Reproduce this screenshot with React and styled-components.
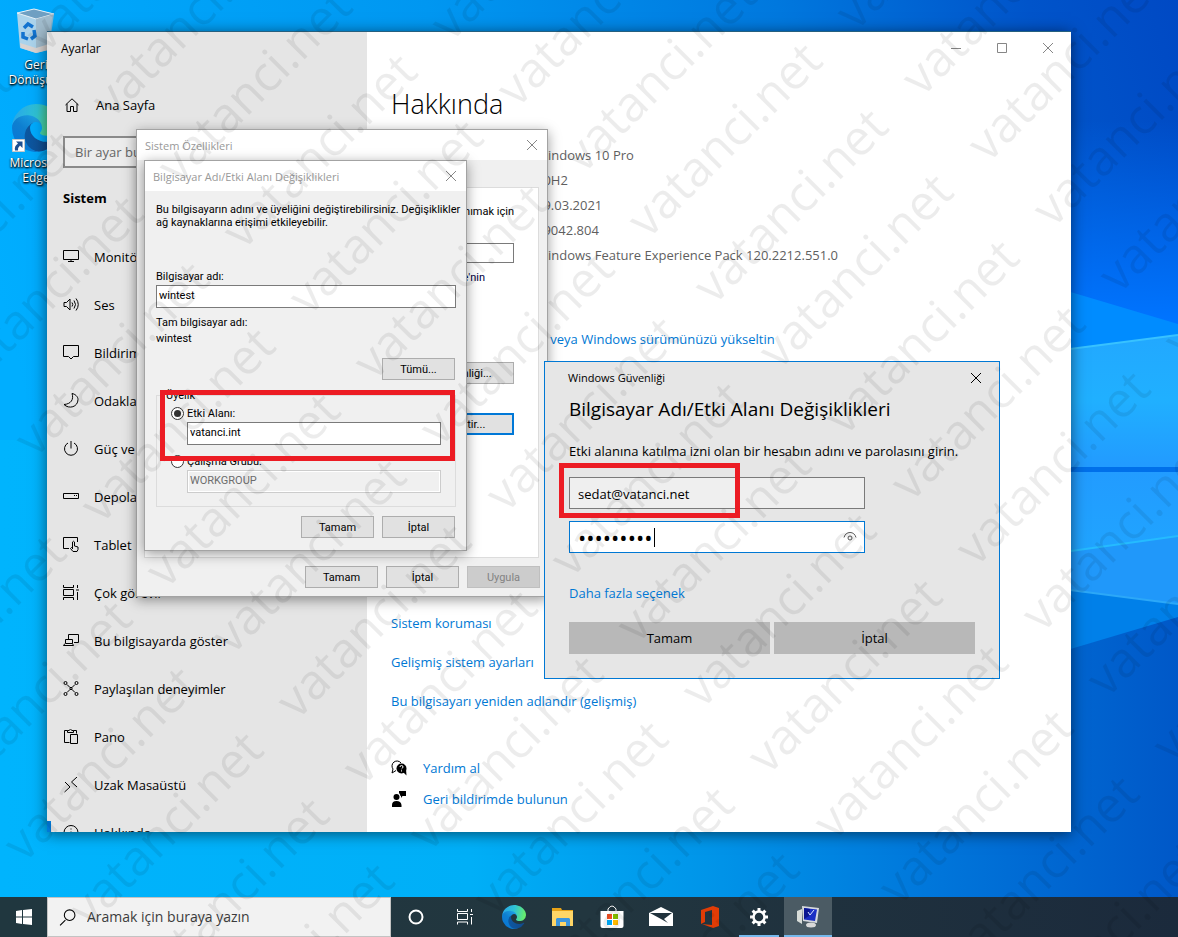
import React, { useState } from 'react';
import styled, { createGlobalStyle, css } from 'styled-components';

const UI = '"Open Sans", "Noto Sans", sans-serif';
const CLASSIC = 'Roboto, "Liberation Sans", Arial, sans-serif';

const navItems = [
  { icon: 'monitor', label: 'Monitör' },
  { icon: 'sound', label: 'Ses' },
  { icon: 'notify', label: 'Bildirimler ve eylemler' },
  { icon: 'moon', label: 'Odaklanma yardımı' },
  { icon: 'power', label: 'Güç ve uyku' },
  { icon: 'storage', label: 'Depolama' },
  { icon: 'tablet', label: 'Tablet' },
  { icon: 'tasks', label: 'Çok görevli' },
  { icon: 'project', label: 'Bu bilgisayarda göster' },
  { icon: 'shared', label: 'Paylaşılan deneyimler' },
  { icon: 'clipboard', label: 'Pano' },
  { icon: 'remote', label: 'Uzak Masaüstü' },
  { icon: 'info', label: 'Hakkında', active: true },
];

const specs = [
  ['Sürüm', 'Windows 10 Pro'],
  ['Sürüm', '20H2'],
  ['Yüklenme tarihi', '29.03.2021'],
  ['İS derlemesi', '19042.804'],
  ['Deneyim', 'Windows Feature Experience Pack 120.2212.551.0'],
];

/* ---------- icons ---------- */

const glyphs = {
  home: <path d="M1.5 8 8 1.8 14.5 8M3 6.8v7.7h3.5V9.5h3v5h3.500V6.800" />,
  monitor: <path d="M.5 1.500h15v9H.5zM8 10.500v2M5 12.500h6" />,
  sound: <path d="M1 5.500h2.500l3.500-3.500v11L3.500 9.500H1zM9 5.500q1.500 2 0 4M11 3.500q3 4 0 8M13 1.500q4.500 6 0 12" />,
  notify: <path d="M.5.500h15v11h-5l-2.500 2.500-2.500-2.500h-5z" />,
  moon: <path d="M9 .5c2 6-1 10.500-8 11 5 5 14 2.500 14-5C15 3.500 12 1 9 .5z" />,
  power: <path d="M8 0v7.500M5 2a6.500 6.500 0 1 0 6 0" />,
  storage: <><path d="M.5 4.500h15v5H.5z" /><path d="M11 6.500h1M13 6.500h1" /></>,
  tablet: <path d="M6 11.500H.5v-11h14V5M3 11.500h3M9.500 12V5q1-1.500 2 0v4l3.500 1v2.500l-1 2h-4l-2.500-3 1-1 1 1" />,
  tasks: <path d="M.5 0v2.500h10V0M.5 4.500h10v6H.5zM.5 15v-2.500h10V15M14.500 0v3M14.500 7v8M13 5h3" />,
  project: <path d="M5.500 6V1.500h10v8H11M2.500 6.500h7v4h-7zM.5 12.500h10l-1-2M.5 12.500l1.500-2" />,
  shared: (
    <>
      <path d="m4 3.500 3 3M12 3.500l-3 3M4 11.500l3-3M12 11.500l-3-3M7 6.500h2v2H7z" />
      <circle cx="2.500" cy="2" r="1.500" />
      <circle cx="13.500" cy="2" r="1.500" />
      <circle cx="2.500" cy="13" r="1.500" />
      <circle cx="13.500" cy="13" r="1.500" />
    </>
  ),
  clipboard: <path d="M6.500 13.500h-5v-12h3v2h6v-2h3v3M4.500 1.500H6Q7.500-1 9 1.500h1.500M7.500 5.500h7v9h-7z" />,
  remote: <path d="M2 5 7 10l-5.500 5M14 0 8.500 5l5.500 5" />,
  info: <><circle cx="8" cy="7.500" r="7" /><path d="M8 6.500v5M8 3.500v1" /></>,
  close: <path d="m3 3 10 10M13 3 3 13" />,
  minimize: <path d="M3 8.500h10" />,
  maximize: <path d="M3.500 3.500h9v9h-9z" />,
  search: <path d="M1 15.500 6 10.500M15 5.800A5 5 0 1 1 5 5.800a5 5 0 0 1 10 0z" />,
  eye: <><path d="M2 8.500q1.500-5 6-5t6 5" /><circle cx="8" cy="9" r="2" /></>,
};

function Glyph({ name, size = 16 }) {
  return (
    <svg width={size} height={size} viewBox="0 0 16 16" fill="none" stroke="currentColor" strokeWidth="1" aria-hidden="true">
      {glyphs[name]}
    </svg>
  );
}

function EdgeLogo({ size, id }) {
  return (
    <svg width={size} height={size} viewBox="0 0 256 256" aria-hidden="true">
      <defs>
        <linearGradient id={`${id}-a`} x1="60" y1="180" x2="240" y2="180" gradientUnits="userSpaceOnUse">
          <stop offset="0" stopColor="#0c59a4" />
          <stop offset="1" stopColor="#114a8b" />
        </linearGradient>
        <linearGradient id={`${id}-b`} x1="150" y1="100" x2="45" y2="220" gradientUnits="userSpaceOnUse">
          <stop offset="0" stopColor="#1b9de2" />
          <stop offset=".5" stopColor="#0e7fd0" />
          <stop offset="1" stopColor="#0a78d4" />
        </linearGradient>
        <linearGradient id={`${id}-c`} x1="10" y1="60" x2="240" y2="110" gradientUnits="userSpaceOnUse">
          <stop offset="0" stopColor="#28a8e8" />
          <stop offset=".5" stopColor="#2fc3d4" />
          <stop offset="1" stopColor="#66eb6e" />
        </linearGradient>
      </defs>
      <path transform="translate(-4.600 -4.900)" fill={`url(#${id}-a)`} d="M235.680 195.460a93.730 93.730 0 0 1-10.540 4.710 101.870 101.870 0 0 1-35.900 6.460c-47.320 0-88.540-32.550-88.540-74.320A31.480 31.480 0 0 1 117.130 105c-42.800 1.800-53.800 46.400-53.800 72.530 0 73.880 68.090 81.370 82.760 81.370 7.910 0 19.840-2.300 27-4.560l1.310-.44a128.340 128.340 0 0 0 66.600-52.800 4 4 0 0 0-5.320-5.640z" />
      <path fill={`url(#${id}-b)`} d="M105.730 241.420a79.200 79.200 0 0 1-22.740-21.340 80.720 80.720 0 0 1 29.530-120c3.120-1.470 8.450-4.130 15.540-4a32.350 32.350 0 0 1 25.690 13 31.880 31.880 0 0 1 6.360 18.660c0-.21 24.460-79.600-80-79.600-43.900 0-80 41.660-80 78.210a130.150 130.150 0 0 0 12.110 56 128 128 0 0 0 156.380 67.110 75.550 75.550 0 0 1-62.780-8z" />
      <path fill={`url(#${id}-c)`} d="M152.330 148.860c-.81 1.050-3.300 2.500-3.300 5.660 0 2.610 1.700 5.120 4.720 7.230 14.380 10 41.490 8.680 41.560 8.680a59.560 59.560 0 0 0 30.270-8.350 61.380 61.380 0 0 0 30.430-52.880c.26-22.410-8-37.310-11.340-43.910C223.460 23.840 177.720 0 128 0A128 128 0 0 0 0 126.200c.48-36.540 36.800-66.050 80-66.050 3.500 0 23.460.34 42 10.070 16.340 8.580 24.900 18.940 30.850 29.210 6.180 10.670 7.280 24.150 7.280 29.520s-2.740 13.330-7.800 19.910z" />
    </svg>
  );
}

function RecycleBin() {
  return (
    <svg width="48" height="48" viewBox="0 0 48 48" aria-hidden="true">
      <path d="M5 7 22 3l20 5-2 4-4 32-12 3-16-5z" fill="#c9dbe8" fillOpacity=".85" />
      <path d="m5 7 17-4 20 5-18 5z" fill="#6f9fc2" stroke="#e6f1f8" />
      <path d="m24 13 18-5-5 35-13 4z" fill="#9fb6c6" fillOpacity=".8" />
      <path d="m8 37 16 5 13-4-1 6-12 3-15-5z" fill="#d9d4d2" />
      <g fill="none" stroke="#1273cf" strokeWidth="3.500">
        <path d="m12 22 4-4 5 3" />
        <path d="m22 24 1 6-4 3" />
        <path d="m16 33-5-2v-5" />
      </g>
    </svg>
  );
}

function ShortcutArrow() {
  return (
    <svg width="13" height="13" viewBox="0 0 13 13" aria-hidden="true">
      <path d="M.5.500h12v12H.5z" fill="#fff" stroke="#c8c8c8" />
      <path d="M4 2.500h6.500V9L8 6.500Q6 8 6 11.500H3Q2 7 6 4.500z" fill="#1d4f91" />
    </svg>
  );
}

const taskIcons = {
  cortana: <circle cx="12" cy="12" r="6.500" fill="none" stroke="#fff" strokeWidth="2" />,
  tasks: (
    <path d="M4.500 4v2.500h10V4M4.500 8.500h10v6h-10zM4.500 19.500V17h10v2.500M18.500 4v3M18.500 12v7.500M17 9.500h3" fill="none" stroke="#fff" />
  ),
  folder: (
    <>
      <path d="M1 3h9l1 2h11v3H1z" fill="#e8a317" />
      <path d="M1 6h21v15H1z" fill="#ffd667" />
      <path d="M5 21v-7l1-1h12l1 1v7h-4v-4H9v4z" fill="#3d96dd" />
    </>
  ),
  store: (
    <>
      <path d="M8 6V4q4-6 8 0v2" fill="none" stroke="#fff" />
      <path d="M.5 6h23v15q0 2-2 2h-19q-2 0-2-2z" fill="#fff" />
      <path d="M7 9h5v5H7z" fill="#f25022" />
      <path d="M13 9h5v5h-5z" fill="#7fba00" />
      <path d="M7 15h5v5H7z" fill="#00a4ef" />
      <path d="M13 15h5v5h-5z" fill="#ffb900" />
    </>
  ),
  mail: (
    <>
      <path d="M0 8 12 2l12 6v13H0z" fill="#fff" />
      <path d="M1 8h22l-8 6 4 4-7-4z" fill="#20323c" />
    </>
  ),
  office: <path d="M15 1 3 5v14l4-2V7l7-2v15l-10-1 11 4 6-2V3z" fill="#e03c06" />,
  gear: (
    <>
      <circle cx="12" cy="12" r="5.500" fill="none" stroke="#fff" strokeWidth="2.500" />
      {[0, 45, 90, 135, 180, 225, 270, 315].map((a) => (
        <path key={a} d="M10.500 3h3v3.500h-3z" fill="#fff" transform={`rotate(${a} 12 12)`} />
      ))}
    </>
  ),
  computer: (
    <>
      <path d="M1 6 6 4v15l-5-3z" fill="#d8dcd8" />
      <path d="m6 1 17 2-2 15-14-2z" fill="#d6d9de" />
      <path d="m8 3 13 1.500-2 11.500-11-1.500z" fill="#1b2fc4" />
      <path d="m8 3 6 1-1 7-5 3z" fill="#0b1690" />
      <path d="m12 7 2 3 4-5" fill="none" stroke="#dfe7ff" />
      <ellipse cx="15" cy="20" rx="5" ry="2.500" fill="#d9d9d9" />
    </>
  ),
};

function HelpIcon() {
  return (
    <svg width="16" height="16" viewBox="0 0 16 16" aria-hidden="true">
      <path d="M5 10.500 1 13l1-4A4.800 4.800 0 1 1 10 3" fill="none" stroke="#000" />
      <circle cx="10.500" cy="8.500" r="5" />
      <path d="m12 12 3.500 3.500L15 9z" />
      <path d="M9 7q0-1.500 1.500-1.500T12 7q0 .8-1.500 2M10.500 10.300v1.200" fill="none" stroke="#fff" />
    </svg>
  );
}

function FeedbackIcon() {
  return (
    <svg width="16" height="16" viewBox="0 0 16 16" aria-hidden="true">
      <circle cx="5.500" cy="6" r="3" />
      <path d="M1 16v-2q0-4 4.500-4t5 4v2zM8 0h7v5h-3.500L10 7V5H9.500Q9 3 8 2z" />
    </svg>
  );
}

/* ---------- desktop ---------- */

const GlobalStyle = createGlobalStyle`
  *, *::before, *::after { box-sizing: border-box; }
  body { margin: 0; background: #0090e8; }
  button, input { font: inherit; color: inherit; margin: 0; }
  button { cursor: pointer; }
  h1, h2, p { margin: 0; font-weight: 400; }
`;

const Desktop = styled.div`
  position: relative;
  display: flex;
  flex-direction: column;
  min-height: 100vh;
  overflow: hidden;
  font-family: ${UI};
  font-size: 13px;
  line-height: 20px;
  color: #000;
`;

const Backdrop = styled.svg`
  position: absolute;
  inset: 0;
  width: 100%;
  height: 100%;
`;

const Workspace = styled.main`
  position: relative;
  flex: 1;
`;

const Shortcuts = styled.div`
  position: relative;
  display: flex;
  flex-direction: column;
  gap: 17px;
  width: 72px;
  padding-top: 6px;
`;

const Shortcut = styled.a`
  display: flex;
  flex-direction: column;
  align-items: center;
  gap: 3px;
  color: #fff;
  font-size: 12px;
  line-height: 15px;
  text-align: center;
  text-decoration: none;
  text-shadow: 0 1px 2px #000, 1px 1px 2px #000;

  svg { display: block; }
`;

const ShortcutLabel = styled.span`
  width: 60px;
`;

const ShortcutArt = styled.span`
  position: relative;

  svg + svg {
    position: absolute;
    left: 0;
    bottom: 0;
  }
`;

/* ---------- windows ---------- */

const SettingsWindow = styled.section`
  position: absolute;
  left: 47px;
  top: 31px;
  display: grid;
  grid-template-columns: 320px 1fr;
  width: 1024px;
  height: 801px;
  overflow: hidden;
  background: #fff;
  border-top: 1px solid #26607f;
`;

const SettingsShadow = styled.div`
  position: absolute;
  left: 47px;
  top: 31px;
  width: 1024px;
  height: 801px;
  box-shadow: 0 2px 14px rgba(0, 0, 0, 0.55);
`;

const Sidebar = styled.aside`
  min-width: 0;
  background: #e5e5e5;
`;

const AppTitle = styled.h2`
  padding: 7px 14px;
  font-size: 12px;
  line-height: 20px;
`;

const HomeLink = styled.a`
  display: flex;
  align-items: center;
  gap: 16px;
  height: 40px;
  margin-top: 19px;
  padding-left: 17px;
  color: inherit;
  text-decoration: none;
`;

const SearchSetting = styled.input`
  display: block;
  width: 288px;
  height: 32px;
  margin: 11px 16px 0;
  padding: 0 10px;
  border: 2px solid #8a8a8a;
  background: #ececec;

  &::placeholder { color: #666; opacity: 1; }
`;

const GroupTitle = styled.h2`
  padding: 20px 16px 0;
  font-size: 13px;
  font-weight: 700;
`;

const NavList = styled.nav`
  display: flex;
  flex-direction: column;
  margin-top: 25px;
`;

const NavLink = styled.a`
  display: flex;
  align-items: center;
  gap: 15px;
  height: 48px;
  padding-left: 16px;
  color: inherit;
  text-decoration: none;
  ${({ $active }) => $active && css`
    background: linear-gradient(#0078d7, #0078d7) 0 50% / 4px 24px no-repeat;
  `}
`;

const Content = styled.div`
  display: flex;
  flex-direction: column;
  min-width: 0;
  padding: 0 0 0 24px;
`;

const WindowButtons = styled.div`
  display: flex;
  justify-content: flex-end;
`;

const WindowButton = styled.button`
  display: grid;
  place-items: center;
  width: ${({ $narrow }) => ($narrow ? '30px' : '46px')};
  height: ${({ $narrow }) => ($narrow ? '28px' : '32px')};
  padding: 0;
  border: 0;
  background: none;
  color: ${({ $dark }) => ($dark ? '#000' : '#868686')};
`;

const PageTitle = styled.h1`
  margin: 20px 0 19px;
  font-size: 27px;
  font-weight: 300;
  line-height: 40px;
`;

const SpecTable = styled.table`
  border-collapse: collapse;
  color: #5f5f5f;
  line-height: 25px;

  th {
    width: 145px;
    padding: 0;
    font-weight: 400;
    text-align: left;
  }
  td { padding: 0; }
`;

const TextLink = styled.a`
  color: #0078d4;
  text-decoration: none;
`;

const UpgradeBlock = styled.div`
  padding-top: 61px;
`;

const RelatedLinks = styled.div`
  display: flex;
  flex-direction: column;
  align-items: flex-start;
  gap: 19px;
  margin-top: 264px;
`;

const HelpLinks = styled.div`
  display: flex;
  flex-direction: column;
  gap: 11px;
  margin-top: 47px;

  a {
    display: flex;
    align-items: center;
    gap: 16px;
  }
`;

const dialogFrame = css`
  position: absolute;
  display: flex;
  flex-direction: column;
  border: 1px solid #a3a3a3;
  background: #f0f0f0;
  font-family: ${CLASSIC};
  font-size: 11px;
  line-height: 13px;
  box-shadow: 0 3px 12px rgba(0, 0, 0, 0.4);
`;

const PropertiesDialog = styled.section`
  ${dialogFrame}
  left: 136px;
  top: 129px;
  width: 412px;
  height: 468px;
`;

const NameDialog = styled.section`
  ${dialogFrame}
  left: 144px;
  top: 160px;
  width: 323px;
  height: 391px;
`;

const DialogBar = styled.header`
  display: flex;
  flex: none;
  align-items: center;
  justify-content: space-between;
  height: 30px;
  padding-left: 8px;
  background: #fff;
  color: #999;
  font-family: ${UI};
`;

const DialogTitle = styled.h2`
  font-size: 11px;
`;

const TabPage = styled.div`
  display: flex;
  flex: 1;
  flex-direction: column;
  align-items: flex-end;
  margin: 27px 8px 8px 7px;
  padding: 17px 24px 0;
  border: 1px solid #dcdcdc;
  background: #fff;
`;

const Note = styled.p`
  white-space: nowrap;
  color: ${({ $navy }) => ($navy ? '#000040' : '#000')};
  ${({ $indented }) => $indented && 'padding-right: 29px;'}
`;

const DescriptionField = styled.div`
  margin: 25px 0 8px;
`;

const PropertyButtons = styled.div`
  display: flex;
  flex-direction: column;
  gap: 29px;
  margin-top: 78px;
`;

const DialogActions = styled.footer`
  display: flex;
  justify-content: flex-end;
  gap: 8px;
  padding: 0 ${({ $inset }) => ($inset ? '11px 12px' : '7px 8px')} 0;
`;

const PushButton = styled.button`
  width: ${({ $wide }) => ($wide ? '103px' : '73px')};
  height: 22px;
  padding: 0;
  border: 1px solid #adadad;
  background: #e1e1e1;
  ${({ $primary }) => $primary && 'border: 2px solid #0078d7;'}

  &:disabled {
    border-color: #bfbfbf;
    background: #ccc;
    color: #838383;
  }
`;

const ClassicInput = styled.input`
  display: block;
  width: ${({ $half }) => ($half ? '180px' : '100%')};
  height: ${({ $half }) => ($half ? '20px' : '23px')};
  padding: 0 2px 2px;
  border: 1px solid #7a7a7a;
  background: #fff;

  &:disabled {
    border-color: #ccc;
    background: #f0f0f0;
    color: #6d6d6d;
    box-shadow: inset 0 0 0 1px #fff;
  }
`;

const NameForm = styled.form`
  display: flex;
  flex: 1;
  flex-direction: column;
  padding: 12px 10px 0 11px;
`;

const NameField = styled.div`
  display: flex;
  flex-direction: column;
  gap: 2px;
  margin-top: 41px;
`;

const FullName = styled.p`
  margin-top: 7px;
  line-height: 16px;
`;

const AllRow = styled.div`
  display: flex;
  justify-content: flex-end;
  margin: 11px 1px 9px 0;
`;

const Membership = styled.fieldset`
  min-width: 0;
  height: 118px;
  margin: 0;
  padding: 4px 14px 0;
  border: 1px solid #dcdcdc;

  legend { padding: 0 2px; margin-left: -7px; }
`;

const RadioRow = styled.label`
  display: flex;
  align-items: center;
  gap: 3px;
  height: 15px;

  input {
    display: grid;
    place-items: center;
    appearance: none;
    width: 13px;
    height: 13px;
    border: 1px solid #333;
    border-radius: 50%;
    background: #fff;
  }
  input:checked::before {
    content: '';
    width: 7px;
    height: 7px;
    border-radius: 50%;
    background: #333;
  }
`;

const RadioBody = styled.div`
  padding: 1px 0 9px 16px;
`;

const SecurityDialog = styled.section`
  position: absolute;
  left: 544px;
  top: 361px;
  width: 456px;
  height: 318px;
  border: 1px solid #0078d4;
  background: #e6e6e6;
`;

const SecurityBar = styled.header`
  display: flex;
  align-items: center;
  justify-content: space-between;
  height: 32px;
  padding-left: 23px;
  font-size: 11px;
`;

const SecurityForm = styled.form`
  display: flex;
  flex-direction: column;
  align-items: flex-start;
  padding: 0 24px;
`;

const SecurityTitle = styled.h1`
  margin-bottom: 17px;
  font-size: 19px;
  line-height: 30px;
`;

const AccountInput = styled.input`
  width: 296px;
  height: 32px;
  margin: 16px 0 12px;
  padding: 2px 8px 0;
  border: 1px solid #7a7a7a;
  background: #efefef;
`;

const PasswordBox = styled.div`
  display: flex;
  align-items: center;
  width: 296px;
  height: 32px;
  padding-left: 8px;
  border: 1px solid #0078d4;
  background: #fff;

  input {
    width: 76px;
    padding: 0;
    border: 0;
    outline: 0;
    background: none;
    font-size: 22px;
  }
`;

const Caret = styled.span`
  width: 1px;
  height: 19px;
  background: #000;
`;

const RevealButton = styled.button`
  display: grid;
  place-items: center;
  width: 28px;
  height: 28px;
  margin-left: auto;
  padding: 0;
  border: 0;
  background: none;
  color: #555;
`;

const MoreOptions = styled(TextLink)`
  margin: 30px 0 19px;
`;

const SecurityActions = styled.div`
  display: grid;
  grid-template-columns: 1fr 1fr;
  gap: 4px;
  width: 100%;

  button {
    height: 32px;
    border: 0;
    background: #b8b8b8;
  }
`;

/* ---------- marks drawn over the windows ---------- */

const Watermark = styled.svg`
  position: absolute;
  inset: 0;
  width: 100%;
  height: 100%;
  pointer-events: none;
`;

const Highlight = styled.div`
  position: absolute;
  left: ${({ $x }) => $x}px;
  top: ${({ $y }) => $y}px;
  width: ${({ $w }) => $w}px;
  height: ${({ $h }) => $h}px;
  border: 5px solid #ec1c24;
  pointer-events: none;
`;

/* ---------- taskbar ---------- */

const Taskbar = styled.footer`
  position: relative;
  display: flex;
  height: 40px;
  background: linear-gradient(90deg, #20373f, #22363f 50%, #1b2a3c);
`;

const StartButton = styled.button`
  display: grid;
  place-items: center;
  width: 47px;
  padding: 0;
  border: 0;
  background: none;
`;

const TaskSearch = styled.label`
  display: flex;
  align-items: center;
  gap: 11px;
  width: 344px;
  padding-left: 11px;
  border: 1px solid #c3c3c3;
  background: #f2f2f2;

  input {
    flex: 1;
    min-width: 0;
    padding: 0;
    border: 0;
    background: none;
    font-size: 14px;
  }
  input::placeholder { color: #3c3c3c; opacity: 1; }
`;

const TaskButtons = styled.div`
  display: flex;
  gap: 1px;
  padding-left: 1px;
`;

const TaskButton = styled.button`
  display: grid;
  place-items: center;
  width: 48px;
  padding: 0;
  border: 0;
  background: ${({ $current }) => ($current ? '#4b5b64' : 'none')};
  ${({ $open }) => $open && css`
    background: linear-gradient(#76b9ed, #76b9ed) 50% 100% / 40px 2px no-repeat;
  `}
  ${({ $current }) => $current && 'box-shadow: inset 0 -2px #76b9ed;'}
`;

// diagonal lattice, only the marks that reach the screen
const marks = [];
for (let col = -4; col <= 3; col += 1) {
  for (let row = -14; row <= 22; row += 1) {
    const x = Math.round(517 + row * 65.600 + col * 405);
    const y = Math.round(109 + row * 65.600 - col * 11);
    if (x > -170 && x < 1200 && y > -10 && y < 1110) marks.push({ x, y });
  }
}

function Wallpaper() {
  return (
    <Backdrop viewBox="0 0 1178 937" preserveAspectRatio="none" aria-hidden="true">
      <defs>
        <linearGradient id="sky" x1="0" y1="300" x2="1178" y2="0" gradientUnits="userSpaceOnUse">
          <stop offset="0" stopColor="#00aeff" />
          <stop offset=".4" stopColor="#0097f1" />
          <stop offset=".68" stopColor="#0078de" />
          <stop offset=".88" stopColor="#0054ca" />
          <stop offset="1" stopColor="#0049c4" />
        </linearGradient>
        <linearGradient id="ground" x1="0" y1="0" x2="1178" y2="0" gradientUnits="userSpaceOnUse">
          <stop offset="0" stopColor="#00b4fd" />
          <stop offset=".4" stopColor="#00aff7" />
          <stop offset=".6" stopColor="#0095e9" />
          <stop offset=".8" stopColor="#0075da" />
          <stop offset="1" stopColor="#0058c8" />
        </linearGradient>
        <linearGradient id="glow" x1="0" y1="120" x2="0" y2="320" gradientUnits="userSpaceOnUse">
          <stop offset="0" stopColor="#0074ff" stopOpacity="0" />
          <stop offset="1" stopColor="#0074ff" />
        </linearGradient>
        <linearGradient id="pane" x1="0" y1="335" x2="0" y2="551" gradientUnits="userSpaceOnUse">
          <stop offset="0" stopColor="#22a8ff" />
          <stop offset=".3" stopColor="#20b0ff" />
          <stop offset=".6" stopColor="#229bff" />
          <stop offset="1" stopColor="#20a4ff" />
        </linearGradient>
      </defs>
      <path d="M0 0h1178v937H0z" fill="url(#sky)" />
      <path d="M0 440h1178v497H0z" fill="url(#ground)" />
      <path d="M1000 120h178v210h-178z" fill="url(#glow)" />
      <path d="M1000 271l178 53v20l-178 14z" fill="#008cff" />
      <path d="M1000 358l178-23v201l-178 25z" fill="url(#pane)" />
      <path d="M1000 358l178-23" stroke="#38c2ff" strokeWidth="2" />
      <path d="M1000 467h178v5h-178z" fill="#0070ea" />
      <path d="M1000 561l178-25v68l-178-23z" fill="#2098fa" />
      <path d="M1000 561l178-25" stroke="#25bbff" strokeWidth="2" />
      <path d="M1000 581l178 23v13l-178 53z" fill="#0080e9" />
      <path d="M1000 581l178 23" stroke="#2ca8f8" strokeWidth="2" />
    </Backdrop>
  );
}

function Settings() {
  return (
    <SettingsWindow aria-label="Ayarlar">
      <Sidebar>
        <AppTitle>Ayarlar</AppTitle>
        <HomeLink href="#home"><Glyph name="home" />Ana Sayfa</HomeLink>
        <SearchSetting aria-label="Bir ayar bulun" placeholder="Bir ayar bulun" />
        <GroupTitle>Sistem</GroupTitle>
        <NavList>
          {navItems.map((item) => (
            <NavLink key={item.icon} href={`#${item.icon}`} $active={item.active}>
              <Glyph name={item.icon} />
              {item.label}
            </NavLink>
          ))}
        </NavList>
      </Sidebar>
      <Content>
        <WindowButtons>
          <WindowButton aria-label="Simge durumuna küçült"><Glyph name="minimize" /></WindowButton>
          <WindowButton aria-label="Ekranı kapla"><Glyph name="maximize" /></WindowButton>
          <WindowButton aria-label="Kapat"><Glyph name="close" /></WindowButton>
        </WindowButtons>
        <PageTitle>Hakkında</PageTitle>
        <SpecTable>
          <tbody>
            {specs.map(([name, value]) => (
              <tr key={value}>
                <th scope="row">{name}</th>
                <td>{value}</td>
              </tr>
            ))}
          </tbody>
        </SpecTable>
        <UpgradeBlock>
          <TextLink href="#upgrade">Ürün anahtarını değiştirin veya Windows sürümünüzü yükseltin</TextLink>
        </UpgradeBlock>
        <RelatedLinks>
          <TextLink href="#protection">Sistem koruması</TextLink>
          <TextLink href="#advanced">Gelişmiş sistem ayarları</TextLink>
          <TextLink href="#rename">Bu bilgisayarı yeniden adlandır (gelişmiş)</TextLink>
        </RelatedLinks>
        <HelpLinks>
          <TextLink href="#help"><HelpIcon />Yardım al</TextLink>
          <TextLink href="#feedback"><FeedbackIcon />Geri bildirimde bulunun</TextLink>
        </HelpLinks>
      </Content>
    </SettingsWindow>
  );
}

function SystemProperties() {
  return (
    <PropertiesDialog aria-label="Sistem Özellikleri">
      <DialogBar>
        <DialogTitle>Sistem Özellikleri</DialogTitle>
        <WindowButton $narrow aria-label="Kapat"><Glyph name="close" /></WindowButton>
      </DialogBar>
      <TabPage>
        <Note>Windows, bilgisayarınızı ağ üzerinde tanımak için</Note>
        <DescriptionField>
          <ClassicInput $half aria-label="Bilgisayar açıklaması" />
        </DescriptionField>
        <Note $navy $indented>Örneğin: "Ayşe'nin</Note>
        <PropertyButtons>
          <PushButton $wide>Ağ Kimliği...</PushButton>
          <PushButton $wide $primary>Değiştir...</PushButton>
        </PropertyButtons>
      </TabPage>
      <DialogActions>
        <PushButton>Tamam</PushButton>
        <PushButton>İptal</PushButton>
        <PushButton disabled>Uygula</PushButton>
      </DialogActions>
    </PropertiesDialog>
  );
}

function NameChange() {
  const [member, setMember] = useState('domain');
  const [name, setName] = useState('wintest');
  const [domain, setDomain] = useState('vatanci.int');

  return (
    <NameDialog aria-label="Bilgisayar Adı/Etki Alanı Değişiklikleri">
      <DialogBar>
        <DialogTitle>Bilgisayar Adı/Etki Alanı Değişiklikleri</DialogTitle>
        <WindowButton $narrow aria-label="Kapat"><Glyph name="close" /></WindowButton>
      </DialogBar>
      <NameForm onSubmit={(e) => e.preventDefault()}>
        <Note>
          Bu bilgisayarın adını ve üyeliğini değiştirebilirsiniz. Değişiklikler
          <br />
          ağ kaynaklarına erişimi etkileyebilir.
        </Note>
        <NameField>
          <label htmlFor="pc-name">Bilgisayar adı:</label>
          <ClassicInput id="pc-name" value={name} onChange={(e) => setName(e.target.value)} />
        </NameField>
        <FullName>
          Tam bilgisayar adı:
          <br />
          {name}
        </FullName>
        <AllRow><PushButton type="button">Tümü...</PushButton></AllRow>
        <Membership>
          <legend>Üyelik</legend>
          <RadioRow>
            <input type="radio" name="member" checked={member === 'domain'} onChange={() => setMember('domain')} />
            Etki Alanı:
          </RadioRow>
          <RadioBody>
            <ClassicInput
              aria-label="Etki Alanı"
              value={domain}
              disabled={member !== 'domain'}
              onChange={(e) => setDomain(e.target.value)}
            />
          </RadioBody>
          <RadioRow>
            <input type="radio" name="member" checked={member === 'group'} onChange={() => setMember('group')} />
            Çalışma Grubu:
          </RadioRow>
          <RadioBody>
            <ClassicInput aria-label="Çalışma Grubu" defaultValue="WORKGROUP" disabled={member !== 'group'} />
          </RadioBody>
        </Membership>
      </NameForm>
      <DialogActions $inset>
        <PushButton>Tamam</PushButton>
        <PushButton>İptal</PushButton>
      </DialogActions>
    </NameDialog>
  );
}

function Security() {
  const [account, setAccount] = useState('sedat@vatanci.net');
  const [secret, setSecret] = useState('*********');
  const [shown, setShown] = useState(false);

  return (
    <SecurityDialog aria-label="Windows Güvenliği">
      <SecurityBar>
        Windows Güvenliği
        <WindowButton $dark aria-label="Kapat"><Glyph name="close" /></WindowButton>
      </SecurityBar>
      <SecurityForm onSubmit={(e) => e.preventDefault()}>
        <SecurityTitle>Bilgisayar Adı/Etki Alanı Değişiklikleri</SecurityTitle>
        <p>Etki alanına katılma izni olan bir hesabın adını ve parolasını girin.</p>
        <AccountInput aria-label="Kullanıcı adı" value={account} onChange={(e) => setAccount(e.target.value)} />
        <PasswordBox>
          <input
            aria-label="Parola"
            type={shown ? 'text' : 'password'}
            value={secret}
            onChange={(e) => setSecret(e.target.value)}
          />
          <Caret />
          <RevealButton type="button" aria-label="Parolayı göster" onClick={() => setShown(!shown)}>
            <Glyph name="eye" />
          </RevealButton>
        </PasswordBox>
        <MoreOptions href="#more">Daha fazla seçenek</MoreOptions>
        <SecurityActions>
          <button type="submit">Tamam</button>
          <button type="button">İptal</button>
        </SecurityActions>
      </SecurityForm>
    </SecurityDialog>
  );
}

function TaskIcon({ name }) {
  return (
    <svg width="24" height="24" viewBox="0 0 24 24" aria-hidden="true">
      {taskIcons[name]}
    </svg>
  );
}

function App() {
  return (
    <>
      <GlobalStyle />
      <Desktop>
        <Wallpaper />
        <Workspace>
          <Shortcuts>
            <Shortcut href="#bin">
              <RecycleBin />
              <ShortcutLabel>Geri Dönüşüm</ShortcutLabel>
            </Shortcut>
            <Shortcut href="#edge">
              <ShortcutArt>
                <EdgeLogo size={48} id="edge-desktop" />
                <ShortcutArrow />
              </ShortcutArt>
              <ShortcutLabel>Microsoft Edge</ShortcutLabel>
            </Shortcut>
          </Shortcuts>
          <SettingsShadow />
          <Settings />
          <SystemProperties />
          <NameChange />
          <Security />
        </Workspace>
        <Taskbar>
          <StartButton aria-label="Başlat">
            <svg width="16" height="16" viewBox="0 0 16 16" fill="#fff" aria-hidden="true">
              <path d="M0 2l6-1v6.500H0zM7 1l9-1v7.500H7zM0 8.500h6V15l-6-1zM7 8.500h9V16l-9-1z" />
            </svg>
          </StartButton>
          <TaskSearch>
            <Glyph name="search" size={17} />
            <input aria-label="Ara" placeholder="Aramak için buraya yazın" />
          </TaskSearch>
          <TaskButtons>
            <TaskButton aria-label="Cortana"><TaskIcon name="cortana" /></TaskButton>
            <TaskButton aria-label="Görev Görünümü"><TaskIcon name="tasks" /></TaskButton>
            <TaskButton aria-label="Microsoft Edge"><EdgeLogo size={24} id="edge-task" /></TaskButton>
            <TaskButton aria-label="Dosya Gezgini"><TaskIcon name="folder" /></TaskButton>
            <TaskButton aria-label="Microsoft Store"><TaskIcon name="store" /></TaskButton>
            <TaskButton aria-label="Posta"><TaskIcon name="mail" /></TaskButton>
            <TaskButton aria-label="Office"><TaskIcon name="office" /></TaskButton>
            <TaskButton aria-label="Ayarlar" $open><TaskIcon name="gear" /></TaskButton>
            <TaskButton aria-label="Sistem Özellikleri" $current><TaskIcon name="computer" /></TaskButton>
          </TaskButtons>
        </Taskbar>
        <Watermark aria-hidden="true">
          {marks.map(({ x, y }) => (
            <text
              key={`${x}-${y}`}
              transform={`translate(${x} ${y}) rotate(-45)`}
              fill="#000"
              fillOpacity=".075"
              fontFamily="Open Sans, Noto Sans, sans-serif"
              fontSize="49"
              fontWeight="500"
            >
              vatanci.net
            </text>
          ))}
        </Watermark>
        <Highlight $x={160} $y={390} $w={295} $h={71} />
        <Highlight $x={559} $y={463} $w={181} $h={55} />
      </Desktop>
    </>
  );
}

export default App;
